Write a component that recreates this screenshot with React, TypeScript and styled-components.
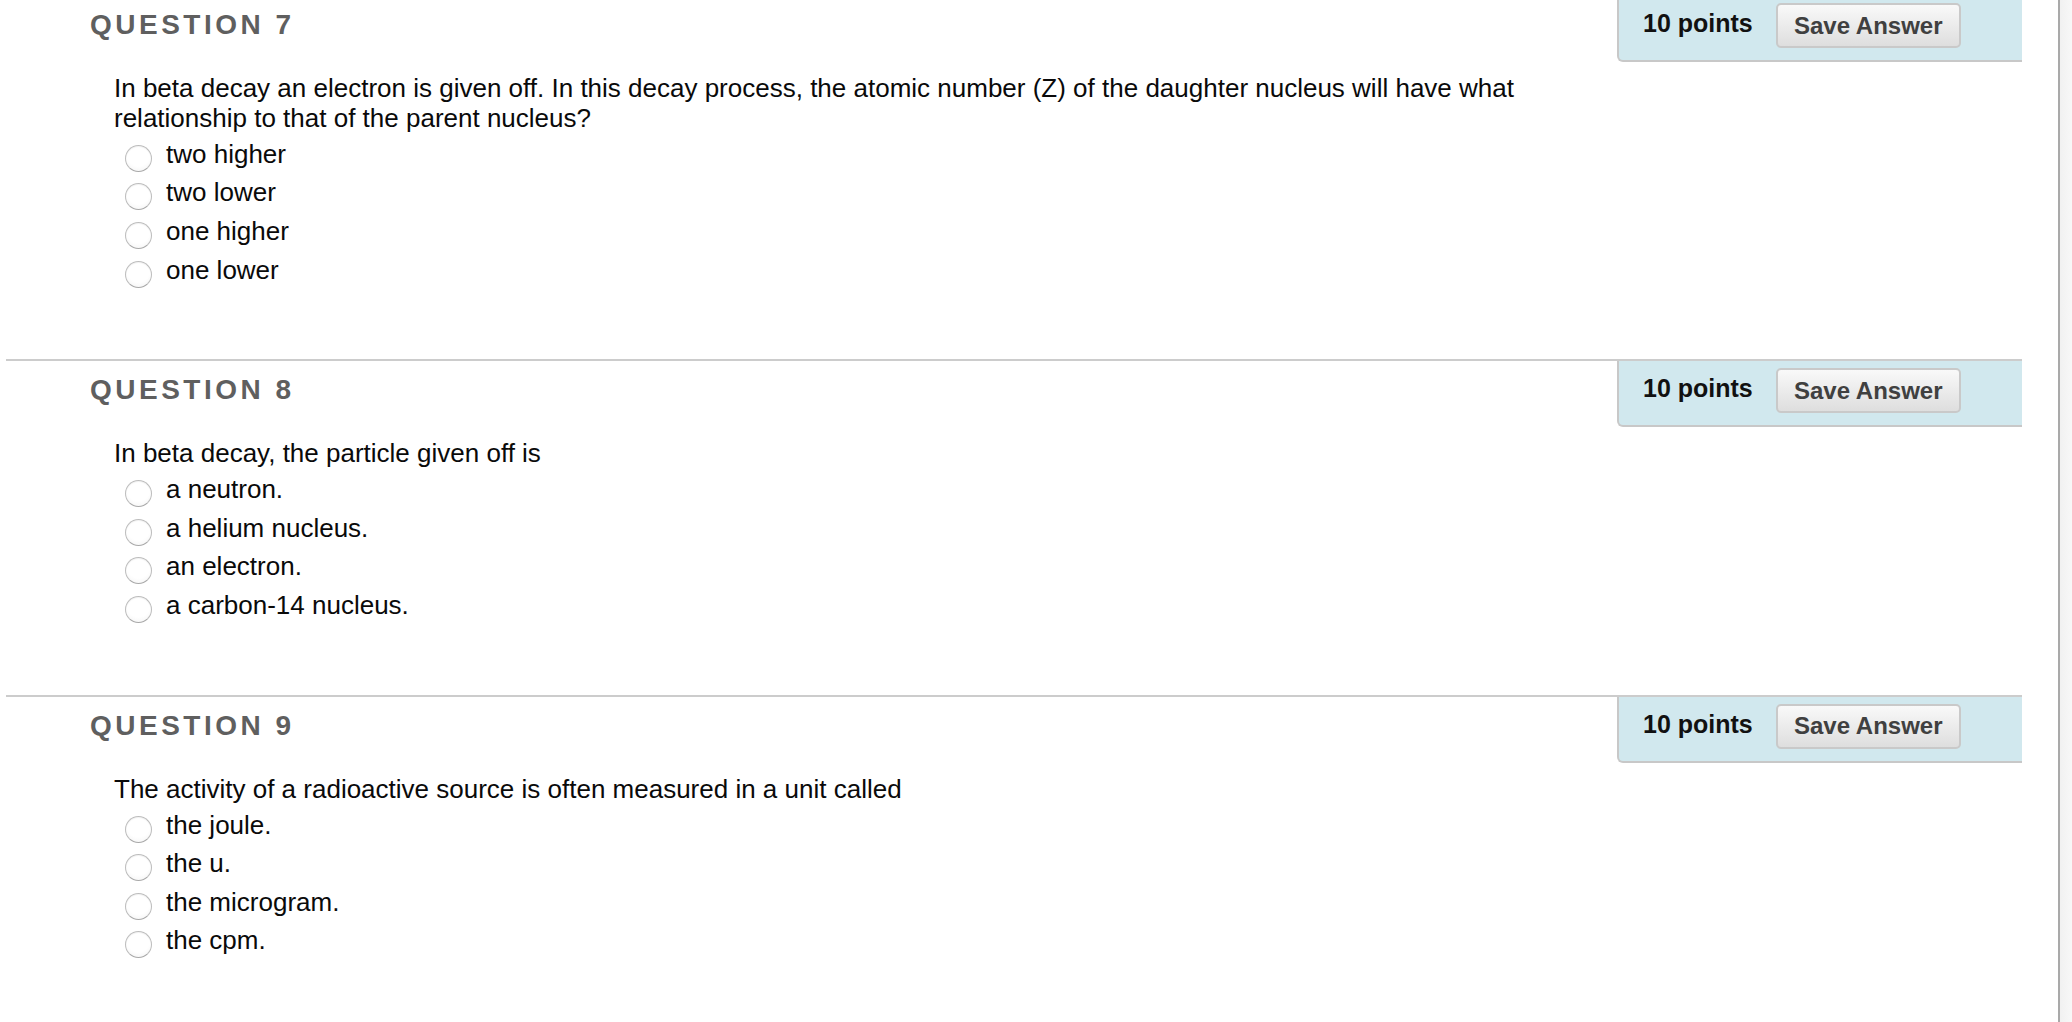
import React from 'react';
import styled, {createGlobalStyle} from 'styled-components';

const GlobalStyle = createGlobalStyle`
  html, body {
    margin: 0;
    padding: 0;
    background: #fff;
    overflow: hidden;
  }
  body {
    font-family: "Liberation Sans", Arial, Helvetica, sans-serif;
    color: #000;
  }
`

const Page = styled.div`
  display: flex;
  height: 100vh;
`

const Main = styled.main`
  flex: 1;
  margin-top: -6px;
`

const Gutter = styled.div`
  width: 12px;
  border-left: 2px solid #a9a9a9;
  background: linear-gradient(to right, #f1f1f1, #f8f8f8);
`

const Section = styled.section`
  margin: 0 36px 0 6px;
  border-top: 2px solid #cccccc;
  padding-bottom: 70px;
`

const Header = styled.div`
  display: flex;
  justify-content: space-between;
  align-items: flex-start;
`

const Heading = styled.h2`
  margin: 13px 0 0 84px;
  font-size: 28px;
  line-height: 32px;
  font-weight: bold;
  letter-spacing: 3.5px;
  color: #5f5f5f;
`

const Panel = styled.div`
  box-sizing: border-box;
  width: 405px;
  height: 66px;
  display: flex;
  align-items: flex-start;
  padding-left: 24px;
  background: #d1e8ee;
  border-left: 2px solid #c8c8c8;
  border-bottom: 2px solid #c8c8c8;
  border-bottom-left-radius: 6px;
`

const Points = styled.span`
  margin-top: 13px;
  font-size: 25px;
  line-height: 29px;
  font-weight: bold;
  color: #111;
`

const SaveButton = styled.button`
  box-sizing: border-box;
  margin: 7px 0 0 23px;
  width: 185px;
  height: 45px;
  padding: 0;
  font-family: "Liberation Sans", Arial, sans-serif;
  font-size: 24px;
  font-weight: bold;
  color: #404040;
  background: linear-gradient(#f9f9f9, #dedede);
  border: 2px solid #c9c9c9;
  border-radius: 5px;
`

const Body = styled.div`
  margin-top: 11px;
  padding-left: 108px;
`

const Prompt = styled.p`
  margin: 0;
  width: 1430px;
  font-size: 26px;
  line-height: 30px;
  color: #0a0a0a;
`

const Options = styled.ul`
  list-style: none;
  margin: 2px 0 0;
  padding: 0 0 0 11px;
`

const Option = styled.li`
  display: flex;
  align-items: center;
  height: 38.6px;
  font-size: 26px;
  color: #0a0a0a;
`

const Radio = styled.span`
  box-sizing: border-box;
  width: 27px;
  height: 27px;
  margin: 8px 14px 0 0;
  border-radius: 50%;
  border: 1.5px solid #bdbdbd;
  border-bottom-color: #a9a9a9;
  background: radial-gradient(circle at 50% 35%, #ffffff 55%, #f1f1f1 100%);
  box-shadow: inset 0 1px 1px rgba(0, 0, 0, 0.06);
`

type Question = {
    no: number
    text: string
    options: string[]
}

const questions: Question[] = [
    {
        no: 7,
        text: 'In beta decay an electron is given off. In this decay process, the atomic number (Z) of the daughter nucleus will have what relationship to that of the parent nucleus?',
        options: ['two higher', 'two lower', 'one higher', 'one lower'],
    },
    {
        no: 8,
        text: 'In beta decay, the particle given off is',
        options: ['a neutron.', 'a helium nucleus.', 'an electron.', 'a carbon-14 nucleus.'],
    },
    {
        no: 9,
        text: 'The activity of a radioactive source is often measured in a unit called',
        options: ['the joule.', 'the u.', 'the microgram.', 'the cpm.'],
    },
]

function App() {
    return (
        <>
            <GlobalStyle/>
            <Page>
                <Main>
                    {questions.map(q =>
                        <Section key={q.no}>
                            <Header>
                                <Heading>QUESTION {q.no}</Heading>
                                <Panel>
                                    <Points>10 points</Points>
                                    <SaveButton type="button">Save Answer</SaveButton>
                                </Panel>
                            </Header>
                            <Body>
                                <Prompt>{q.text}</Prompt>
                                <Options>
                                    {q.options.map(o =>
                                        <Option key={o}>
                                            <Radio/>
                                            <span>{o}</span>
                                        </Option>
                                    )}
                                </Options>
                            </Body>
                        </Section>
                    )}
                </Main>
                <Gutter/>
            </Page>
        </>
    );
}

export default App;
